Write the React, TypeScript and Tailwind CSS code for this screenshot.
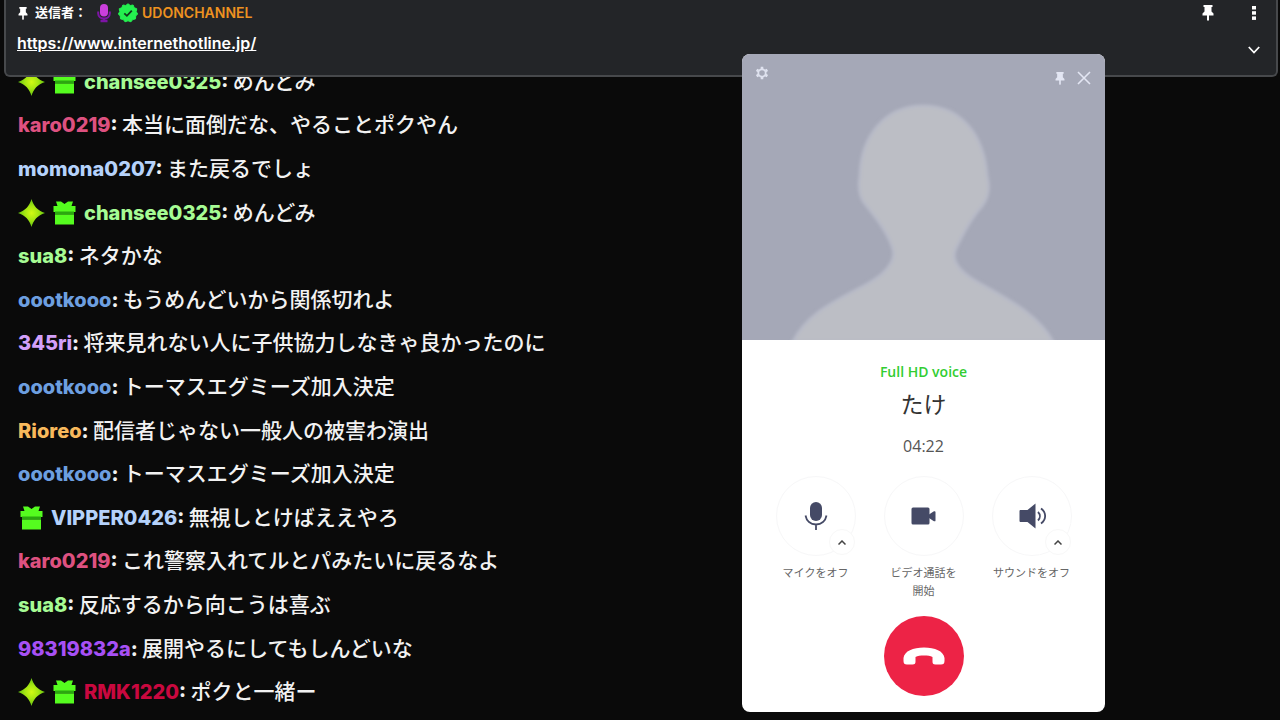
import React from 'react';

type Badge = 'star' | 'gift';

interface Message {
  name: string;
  color: string;
  text: string;
  badges?: Badge[];
}

const messages: Message[] = [
  { name: 'chansee0325', color: 'text-[#a6fc94]', text: 'めんどみ', badges: ['star', 'gift'] },
  { name: 'karo0219', color: 'text-[#de5180]', text: '本当に面倒だな、やることポクやん' },
  { name: 'momona0207', color: 'text-[#b5d2fb]', text: 'また戻るでしょ' },
  { name: 'chansee0325', color: 'text-[#a6fc94]', text: 'めんどみ', badges: ['star', 'gift'] },
  { name: 'sua8', color: 'text-[#a6fc94]', text: 'ネタかな' },
  { name: 'oootkooo', color: 'text-[#6d9fe0]', text: 'もうめんどいから関係切れよ' },
  { name: '345ri', color: 'text-[#d3a0fa]', text: '将来見れない人に子供協力しなきゃ良かったのに' },
  { name: 'oootkooo', color: 'text-[#6d9fe0]', text: 'トーマスエグミーズ加入決定' },
  { name: 'Rioreo', color: 'text-[#f8b95c]', text: '配信者じゃない一般人の被害わ演出' },
  { name: 'oootkooo', color: 'text-[#6d9fe0]', text: 'トーマスエグミーズ加入決定' },
  { name: 'VIPPER0426', color: 'text-[#b5d2fb]', text: '無視しとけばええやろ', badges: ['gift'] },
  { name: 'karo0219', color: 'text-[#de5180]', text: 'これ警察入れてルとパみたいに戻るなよ' },
  { name: 'sua8', color: 'text-[#a6fc94]', text: '反応するから向こうは喜ぶ' },
  { name: '98319832a', color: 'text-[#a750f5]', text: '展開やるにしてもしんどいな' },
  { name: 'RMK1220', color: 'text-[#c9083f]', text: 'ポクと一緒ー', badges: ['star', 'gift'] },
];

const StarIcon = () => (
  <svg width="27" height="28" viewBox="0 0 27 28">
    <defs>
      <radialGradient id="star">
        <stop offset="0" stopColor="#d2fa14" />
        <stop offset="0.5" stopColor="#a4e612" />
        <stop offset="1" stopColor="#5fc00e" />
      </radialGradient>
    </defs>
    <path d="M13.5 0C15.5 7 19.5 11.500 27 14C19.5 16.500 15.5 21 13.5 28C11.5 21 7.5 16.500 0 14C7.5 11.500 11.5 7 13.5 0Z" fill="url(#star)" />
  </svg>
);

const GiftIcon = () => (
  <svg width="27" height="24" viewBox="0 0 27 24">
    <path d="M5 0.5L10 0.5L13.5 3L17 0.5L22 0.5L20.5 5H24.5V11H2.500V5H6.500Z" fill="#55fc1f" />
    <path d="M4 10.5H23V13.500H4Z" fill="#2aa80f" />
    <path d="M4 13.500H23V23.500H4Z" fill="#55fc1f" />
  </svg>
);

const PinIcon = ({ className = '' }: { className?: string }) => (
  <svg className={className} viewBox="0 0 12 16" fill="currentColor">
    <path d="M1.500 0H10.500V2H9.500V6.500L11.500 8.500V10.500H7V15L6 16L5 15V10.500H0.500V8.500L2.500 6.500V2H1.500Z" />
  </svg>
);

const GearIcon = () => (
  <svg width="14" height="14" viewBox="0 0 14 14" fill="none" stroke="currentColor">
    <circle cx="7" cy="7" r="3.700" strokeWidth="1.800" />
    <path d="M7 0.800V3M7 11V13.200M1.600 3.900L3.500 5M10.500 9L12.400 10.100M1.600 10.100L3.500 9M10.500 5L12.400 3.900" strokeWidth="2.600" />
  </svg>
);

const MicBadge = () => (
  <svg width="14" height="20" viewBox="0 0 14 20" fill="none">
    <path d="M1.200 8.500V10.500C1.200 13.500 3.800 15.500 7 15.500S12.800 13.500 12.800 10.500V8.500" stroke="#7d14a5" strokeWidth="2" />
    <path d="M7 15V19M3.500 18H10.500" stroke="#7d14a5" strokeWidth="2.500" />
    <rect x="3" y="1" width="8" height="12.500" rx="4" fill="#cb3fdc" />
  </svg>
);

const VerifiedBadge = () => (
  <svg width="20" height="20" viewBox="0 0 20 20">
    <path
      d="M10 0.800L12.300 2.500L15.100 2L16.200 4.700L18.800 5.800L18.200 8.500L19.600 11L17.700 13L17.500 15.900L14.700 16.500L13 18.800L10 17.800L7 18.800L5.300 16.500L2.500 15.900L2.300 13L0.400 11L1.800 8.500L1.200 5.800L3.800 4.700L4.900 2L7.700 2.500Z"
      fill="#24f04f"
      stroke="#24f04f"
      strokeLinejoin="round"
    />
    <path d="M6.300 10.300L8.900 12.800L13.800 7.600" fill="none" stroke="#12381c" strokeWidth="1.800" />
  </svg>
);

const MicIcon = () => (
  <svg width="24" height="30" viewBox="0 0 24 30">
    <rect x="6" y="1" width="12" height="19" rx="6" fill="#454a66" />
    <path d="M1.500 14.500C2.500 20 6.500 23.500 12 23.500S21.500 20 22.500 14.500M12 23.500V29" fill="none" stroke="#454a66" strokeWidth="1.800" />
  </svg>
);

const VideoIcon = () => (
  <svg width="26" height="18" viewBox="0 0 26 18" fill="#454a66">
    <rect x="0.500" y="0.500" width="18" height="17" rx="1.500" />
    <path d="M18 7.500L22.500 4.500C23.500 4 24.500 4 24.500 5V13.500C24.500 14.500 23.500 14.500 22.500 14L18 11Z" />
  </svg>
);

const SoundIcon = () => (
  <svg width="28" height="26" viewBox="0 0 28 26">
    <path d="M2.500 7H9.500L17.500 0.500V25.500L9.500 19H2.500C2 19 1.500 18.500 1.500 18V8C1.500 7.500 2 7 2.500 7Z" fill="#454a66" />
    <path d="M20 9C22.500 11.500 22.500 15 20 17.500M23 5.500C28.500 9.500 28.500 16.500 23 20.500" fill="none" stroke="#454a66" strokeWidth="1.800" />
  </svg>
);

const HangUpIcon = () => (
  <svg width="42" height="18" viewBox="0 0 42 18">
    <path d="M0.500 11C1.500 4 10 0.500 21 0.500S40.500 4 41.500 11V14C41.500 16.500 40.500 17.500 38 17.500H32.500C30 17.500 29.500 16.500 29.500 14.500V10C27.500 8.800 24.500 8.500 21 8.500S14.500 8.800 12.500 10V14.500C12.500 16.500 12 17.500 9.500 17.500H4C1.500 17.500 0.500 16.500 0.500 14Z" fill="#fff" />
  </svg>
);

const Silhouette = () => (
  <svg className="block h-[286px] w-full" viewBox="0 0 363 286" preserveAspectRatio="xMidYMax slice">
    <defs>
      <filter id="soft">
        <feGaussianBlur stdDeviation="1.500" />
      </filter>
    </defs>
    <rect width="363" height="286" fill="#a5a8b7" />
    <path
      d="M181 52C143 52 119 82 118 122C116 134 117 143 124 151C133 162 141 172 147 185C151 194 154 200 149 209C144 218 136 224 127 229C98 245 65 258 51 288H311C297 261 267 246 237 229C226 223 218 217 214 209C210 201 213 195 218 186C225 172 231 162 240 152C247 143 248 134 245 122C242 82 220 52 181 52Z"
      fill="#bcbec5"
      stroke="#b7bac7"
      strokeWidth="3"
      filter="url(#soft)"
    />
  </svg>
);

const controls = [
  { id: 'mic', label: 'マイクをオフ', icon: <MicIcon />, menu: true },
  { id: 'video', label: 'ビデオ通話を開始', icon: <VideoIcon />, menu: false },
  { id: 'sound', label: 'サウンドをオフ', icon: <SoundIcon />, menu: true },
];

const PinnedMessage = () => (
  <header className="absolute inset-x-1 top-0 mr-[-2px] flex justify-between rounded-b-md border-2 border-t-0 border-[#47494c] bg-[#232528] pb-px pr-[10px] pl-[11px] text-white">
    <div>
      <div className="flex h-[26px] items-center text-[13px] font-bold">
        <PinIcon className="mr-[6px] h-[13px] w-3" />
        <span>送信者：</span>
        <span className="mr-[7px] ml-[10px]"><MicBadge /></span>
        <VerifiedBadge />
        <span className="ml-1 text-sm font-semibold text-[#ee9220]">UDONCHANNEL</span>
      </div>
      <a href="https://www.internethotline.jp/" className="text-base leading-[34px] font-semibold underline">
        https://www.internethotline.jp/
      </a>
    </div>
    <div className="grid grid-cols-2 gap-x-[22px]">
      <button aria-label="ピン" className="flex h-[26px] w-6 items-center justify-center">
        <PinIcon className="h-4 w-3" />
      </button>
      <button aria-label="メニュー" className="flex h-[26px] w-6 items-center justify-center">
        <svg width="4" height="14" viewBox="0 0 4 14" fill="#fff">
          <rect width="4" height="3.500" />
          <rect y="5.200" width="4" height="3.500" />
          <rect y="10.400" width="4" height="3.500" />
        </svg>
      </button>
      <button aria-label="開く" className="col-start-2 flex h-12 w-6 items-center justify-center">
        <svg width="12" height="8" viewBox="0 0 12 8" fill="none" stroke="#fff" strokeWidth="1.800">
          <path d="M0.800 1L6 6.500L11.200 1" />
        </svg>
      </button>
    </div>
  </header>
);

const CallWindow = () => (
  <section className="absolute top-[54px] right-[175px] w-[363px] overflow-hidden rounded-lg bg-white font-['Open_Sans','Noto_Sans_CJK_JP',sans-serif]">
    <div className="relative">
      <Silhouette />
      <button aria-label="設定" className="absolute top-3 left-[13px] text-[#dfe2ef]">
        <GearIcon />
      </button>
      <div className="absolute top-[17px] right-[14px] flex items-center gap-3 text-[#e3e6f3]">
        <button aria-label="固定"><PinIcon className="h-[13px] w-[10px]" /></button>
        <button aria-label="閉じる">
          <svg width="14" height="14" viewBox="0 0 14 14" stroke="currentColor" strokeWidth="1.600">
            <path d="M1 1L13 13M13 1L1 13" />
          </svg>
        </button>
      </div>
    </div>
    <div className="flex flex-col items-center pt-[22px] pb-4">
      <p className="text-sm leading-5 font-semibold text-[#32cd32]">Full HD voice</p>
      <h2 className="mt-[6px] text-[23px] leading-8 font-normal text-[#333]">たけ</h2>
      <p className="mt-4 text-base leading-5 text-[#555]">04:22</p>
      <div className="mt-5 flex gap-7">
        {controls.map((control) => (
          <div key={control.id} className="relative flex w-20 flex-col items-center">
            <button id={control.id} className="flex size-20 items-center justify-center rounded-full border border-[#f7f7f8] bg-white">
              {control.icon}
            </button>
            {control.menu && (
              <button aria-label="デバイス" className="absolute top-[53px] left-[53px] flex size-[26px] items-center justify-center rounded-full border border-[#f8f8f8] bg-white">
                <svg width="8" height="5" viewBox="0 0 8 5" fill="none" stroke="#444" strokeWidth="1.500">
                  <path d="M0.500 4.500L4 1L7.500 4.500" />
                </svg>
              </button>
            )}
            <label htmlFor={control.id} className="mt-2 w-[78px] text-center text-[11px] leading-[18px] text-[#666]">
              {control.id === 'video' ? <>ビデオ通話を<br />開始</> : control.label}
            </label>
          </div>
        ))}
      </div>
      <button aria-label="通話を終了" className="mt-4 flex size-20 items-center justify-center rounded-full bg-[#ed2346]">
        <HangUpIcon />
      </button>
    </div>
  </section>
);

const App = () => {
  return (
    <main className="relative flex min-h-screen flex-col bg-[#0a0a0a] pt-[60px] pb-[6px] font-['Inter','Noto_Sans_CJK_JP',sans-serif]">
      <ul className="grid flex-1 auto-rows-fr pl-[18px]">
        {messages.map((message, index) => (
          <li key={index} className="flex items-center text-[21px] leading-8 text-[#f2f2f2]">
            {message.badges?.map((badge) => (
              <span key={badge} className="mr-[6px]">
                {badge === 'star' ? <StarIcon /> : <GiftIcon />}
              </span>
            ))}
            <p className="font-medium">
              <span className="text-[20px] font-extrabold">
                <span className={message.color}>{message.name}</span>:{' '}
              </span>
              {message.text}
            </p>
          </li>
        ))}
      </ul>
      <PinnedMessage />
      <CallWindow />
    </main>
  );
};

export default App;
